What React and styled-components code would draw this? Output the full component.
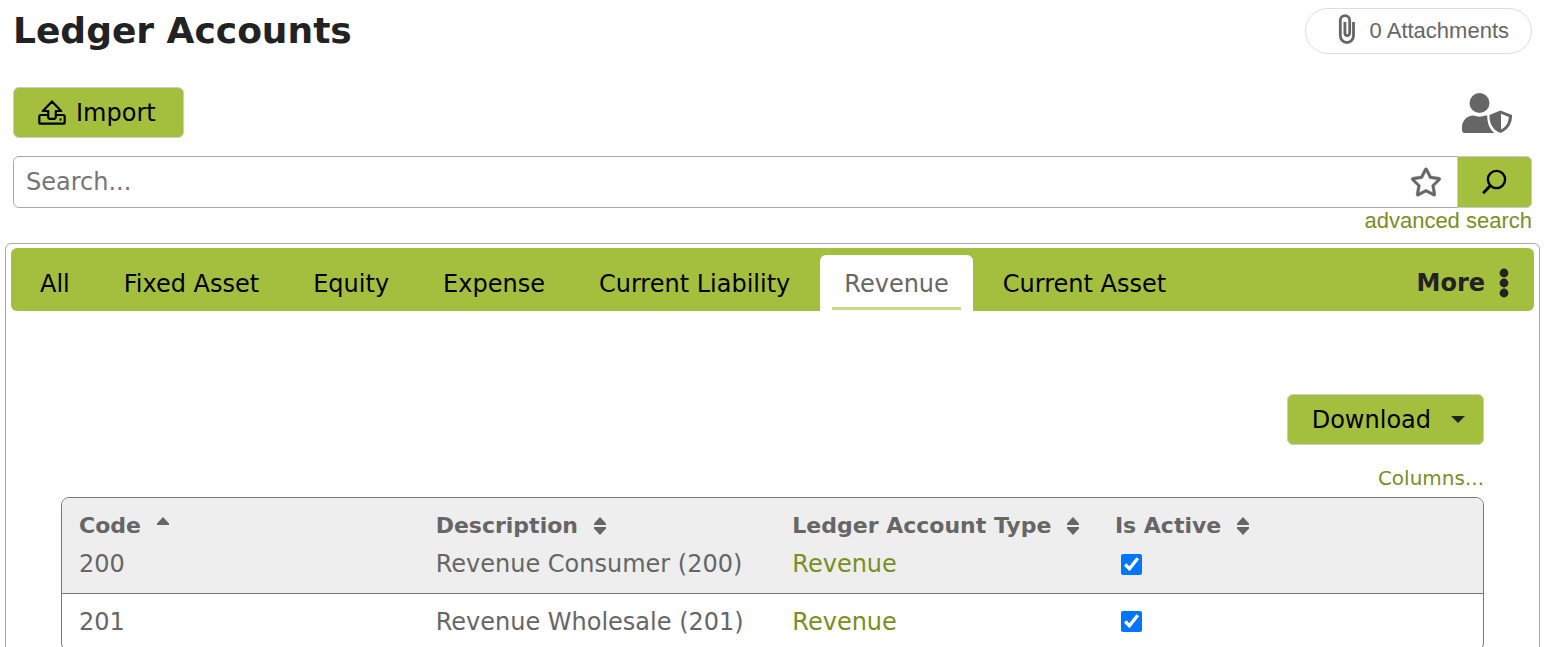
import { useState } from 'react';
import styled, { createGlobalStyle } from 'styled-components';
import { FaRegStar } from 'react-icons/fa';

const tabs = ['All', 'Fixed Asset', 'Equity', 'Expense', 'Current Liability', 'Revenue', 'Current Asset'];

const columns = [
  { label: 'Code', sort: 'asc' },
  { label: 'Description' },
  { label: 'Ledger Account Type' },
  { label: 'Is Active' },
];

const accounts = [
  { code: '200', description: 'Revenue Consumer (200)', type: 'Revenue', active: true },
  { code: '201', description: 'Revenue Wholesale (201)', type: 'Revenue', active: true },
];

const ImportIcon = () => (
  <svg width='28' height='25' viewBox='0 0 28 25' fill='none' stroke='#000' strokeWidth='2.2' strokeLinejoin='round' aria-hidden='true'>
    <path d='M14 1.4 4.8 11h5.4v6a1.8 1.8 0 0 0 1.800 1.800h4a1.800 1.800 0 0 0 1.800-1.800v-6h5.400z' />
    <path d='M9.500 15H2.800a1.500 1.500 0 0 0-1.500 1.500v5.700a1.500 1.500 0 0 0 1.500 1.500h22.400a1.500 1.500 0 0 0 1.500-1.500v-5.700a1.500 1.500 0 0 0-1.500-1.500h-6.700' />
    <path d='M21.500 19.500h2' />
  </svg>
);

const ClipIcon = () => (
  <svg width='18' height='34' viewBox='0 0 18 34' fill='none' stroke='#666' strokeWidth='2.8' aria-hidden='true'>
    <path d='M15.500 8v13.500a6.600 7 0 0 1-13.200 0V6.600a4.700 5 0 0 1 9.400 0V19a2.400 2.600 0 0 1-4.800 0V8' />
  </svg>
);

const UserShieldIcon = () => (
  <svg width='50' height='40' viewBox='0 0 50 40' fill='#666' aria-hidden='true'>
    <circle cx='17.500' cy='10' r='10' />
    <path d='M0 37v-2.500C0 27.500 4.800 22.500 11.500 22.500c3.500 1.500 8.500 1.500 12 0l1.700.1C25.200 30 27.500 36.500 32.500 40H3a3 3 0 0 1-3-3z' />
    <path fillRule='evenodd' d='M38.500 17.500 50 22c.3 8-3.500 15-11.500 18-8-3-11.300-10-11-18zM39 20.800v15.700c5-2.500 7.500-7 7.800-12.500z' />
  </svg>
);

const SearchIcon = () => (
  <svg width='26' height='26' viewBox='0 0 26 26' fill='none' stroke='#000' strokeWidth='2.400' strokeLinecap='round' aria-hidden='true'>
    <circle cx='14.500' cy='10.500' r='8.600' />
    <path d='M8.200 16.800 2 23.200' strokeWidth='3' />
  </svg>
);

const DotsIcon = () => (
  <svg width='10' height='30' viewBox='0 0 10 30' fill='#222' aria-hidden='true'>
    <circle cx='5' cy='5' r='4.400' />
    <circle cx='5' cy='15' r='4.400' />
    <circle cx='5' cy='25' r='4.400' />
  </svg>
);

const SortIcon = ({ sort }) => (
  <svg width='14' height='18' viewBox='0 0 14 18' fill='#666' aria-hidden='true'>
    <path d='M7 0 13 6.500V8H1V6.500z' />
    {sort !== 'asc' && <path d='M7 18 1 11.500V10h12v1.500z' />}
  </svg>
);

export default function App() {
  const [active, setActive] = useState('Revenue');
  const [rows, setRows] = useState(accounts);

  const toggle = (code) =>
    setRows(rows.map((row) => (row.code === code ? { ...row, active: !row.active } : row)));

  return (
    <>
      <GlobalStyle />
      <Page>
        <Header>
          <TitleRow>
            <Title>Ledger Accounts</Title>
            <Attachments type='button'>
              <ClipIcon />
              0 Attachments
            </Attachments>
          </TitleRow>
          <ActionRow>
            <Button type='button'>
              <ImportIcon />
              Import
            </Button>
            <IconButton type='button' aria-label='Permissions'>
              <UserShieldIcon />
            </IconButton>
          </ActionRow>
          <SearchBar>
            <SearchInput type='text' placeholder='Search...' aria-label='Search' />
            <IconButton type='button' aria-label='Save search'>
              <FaRegStar size={32} strokeWidth={8} />
            </IconButton>
            <SearchButton type='button' aria-label='Run search'>
              <SearchIcon />
            </SearchButton>
          </SearchBar>
          <AdvancedLink href='#advanced'>advanced search</AdvancedLink>
        </Header>

        <Panel>
          <TabBar>
            {tabs.map((tab) => (
              <Tab key={tab} type='button' $active={tab === active} onClick={() => setActive(tab)}>
                <TabLabel>{tab}</TabLabel>
              </Tab>
            ))}
            <MoreButton type='button'>
              More
              <DotsIcon />
            </MoreButton>
          </TabBar>

          <Content>
            <Button type='button'>
              Download
              <Caret />
            </Button>
            <ColumnsLink href='#columns'>Columns...</ColumnsLink>
            <TableFrame>
              <Table>
                <colgroup>
                  <Col $width='25.1%' />
                  <Col $width='25.1%' />
                  <Col $width='22.7%' />
                  <Col />
                </colgroup>
                <thead>
                  <tr>
                    {columns.map((col) => (
                      <Th key={col.label}>
                        <SortButton type='button'>
                          {col.label}
                          <SortIcon sort={col.sort} />
                        </SortButton>
                      </Th>
                    ))}
                  </tr>
                </thead>
                <tbody>
                  {rows.map((row) => (
                    <Row key={row.code}>
                      <Td>{row.code}</Td>
                      <Td>{row.description}</Td>
                      <Td>
                        <TypeLink href='#revenue'>{row.type}</TypeLink>
                      </Td>
                      <Td>
                        <Checkbox
                          type='checkbox'
                          aria-label={`${row.code} is active`}
                          checked={row.active}
                          onChange={() => toggle(row.code)}
                        />
                      </Td>
                    </Row>
                  ))}
                </tbody>
              </Table>
            </TableFrame>
          </Content>
        </Panel>
      </Page>
    </>
  );
}

const GlobalStyle = createGlobalStyle`
  * {
    box-sizing: border-box;
  }
  html {
    scrollbar-width: none;
  }
  body {
    margin: 0;
    background: #fff;
    color: #666;
    font-family: Verdana, "DejaVu Sans", sans-serif;
    font-size: 24px;
  }
  button, input {
    font-family: inherit;
    font-size: inherit;
  }
`;

const Page = styled.main`
  padding: 8px 7px 0 5px;
`;

const Header = styled.header`
  display: flex;
  flex-direction: column;
  padding: 0 8px;
`;

const TitleRow = styled.div`
  display: flex;
  align-items: center;
  justify-content: space-between;
`;

const Title = styled.h1`
  margin: 0;
  color: #222;
  font-size: 36px;
  line-height: 46px;
`;

const Attachments = styled.button`
  display: flex;
  align-items: center;
  gap: 14px;
  height: 46px;
  padding: 0 22px 0 32px;
  border: 1px solid #ddd;
  border-radius: 23px;
  background: #fff;
  color: #666;
  font-family: Arial, "Liberation Sans", sans-serif;
  font-size: 22px;
`;

const ActionRow = styled.div`
  display: flex;
  align-items: center;
  justify-content: space-between;
  margin: 33px 0 18px;
  padding-right: 20px;
`;

const Button = styled.button`
  display: flex;
  align-items: center;
  gap: 10px;
  min-width: 171px;
  height: 51px;
  padding: 0 24px;
  border: 1px solid #ccc;
  border-radius: 6px;
  background: #a4be3d;
  color: #000;
`;

const IconButton = styled.button`
  display: flex;
  padding: 0;
  border: 0;
  background: none;
  color: #666;
`;

const SearchBar = styled.div`
  display: flex;
  align-items: center;
  height: 52px;
  border: 1px solid #aaa;
  border-radius: 6px;
`;

const SearchInput = styled.input`
  flex: 1;
  min-width: 0;
  padding: 0 12px;
  border: 0;
  outline: 0;
  background: none;
  color: #666;

  &::placeholder {
    color: #757575;
  }
`;

const SearchButton = styled.button`
  display: flex;
  align-items: center;
  justify-content: center;
  width: 75px;
  height: 52px;
  margin: -1px -1px -1px 15px;
  border: 1px solid #ccc;
  border-radius: 0 6px 6px 0;
  background: #a4be3d;
`;

const AdvancedLink = styled.a`
  align-self: flex-end;
  color: #7a8e24;
  font-family: Arial, "Liberation Sans", sans-serif;
  font-size: 22px;
  line-height: 26px;
  text-decoration: none;
`;

const Panel = styled.section`
  margin-top: 9px;
  padding: 4px 5px;
  border: 1px solid #aaa;
  border-radius: 6px;
`;

const TabBar = styled.nav`
  display: flex;
  align-items: flex-end;
  gap: 6px;
  height: 63px;
  padding-left: 5px;
  border-radius: 6px;
  background: #a4be3d;
`;

const TabLabel = styled.span`
  padding: 0 12px;
  line-height: 46px;
  white-space: nowrap;
`;

const Tab = styled.button`
  display: flex;
  flex-direction: column;
  justify-content: flex-end;
  height: 56px;
  padding: 0 12px 1px;
  border: 0;
  border-radius: 6px 6px 0 0;
  background: ${({ $active }) => ($active ? '#fff' : 'none')};
  color: ${({ $active }) => ($active ? '#666' : '#000')};

  ${TabLabel} {
    border-bottom: 3px solid ${({ $active }) => ($active ? '#c8d88b' : 'transparent')};
  }
`;

const MoreButton = styled.button`
  display: flex;
  align-items: center;
  gap: 14px;
  height: 56px;
  margin-left: auto;
  padding: 0 25px;
  border: 0;
  background: none;
  color: #222;
  font-weight: bold;
`;

const Content = styled.div`
  display: flex;
  flex-direction: column;
  align-items: flex-end;
  padding: 83px 50px 40px;
`;

const Caret = styled.span`
  margin: 0 -6px 0 10px;
  border: 7px solid transparent;
  border-top-color: #222;
  border-bottom: 0;
`;

const ColumnsLink = styled.a`
  margin: 18px 0 4px;
  color: #7a8e24;
  font-size: 20px;
  line-height: 30px;
  text-decoration: none;
`;

const TableFrame = styled.div`
  width: 100%;
  overflow: hidden;
  border: 1px solid #777;
  border-radius: 8px;
`;

const Table = styled.table`
  width: 100%;
  border-collapse: collapse;
  table-layout: fixed;
`;

const Col = styled.col`
  width: ${({ $width }) => $width || 'auto'};
`;

const Th = styled.th`
  height: 38px;
  padding: 18px 0 0 17px;
  background: #eee;
  text-align: left;
`;

const SortButton = styled.button`
  display: flex;
  align-items: center;
  gap: 15px;
  padding: 0;
  border: 0;
  background: none;
  color: #666;
  font-size: 22px;
  font-weight: bold;
  line-height: 20px;
  white-space: nowrap;
`;

const Row = styled.tr`
  height: 57px;
  border-bottom: 1px solid #777;

  &:nth-child(odd) {
    background: #eee;
  }
  &:last-child {
    border-bottom: 0;
  }
`;

const Td = styled.td`
  padding: 0 0 0 17px;
  white-space: nowrap;
`;

const TypeLink = styled.a`
  color: #7a8e24;
  text-decoration: none;
`;

const Checkbox = styled.input`
  display: block;
  width: 21px;
  height: 21px;
  margin: 0 0 0 6px;
`;
